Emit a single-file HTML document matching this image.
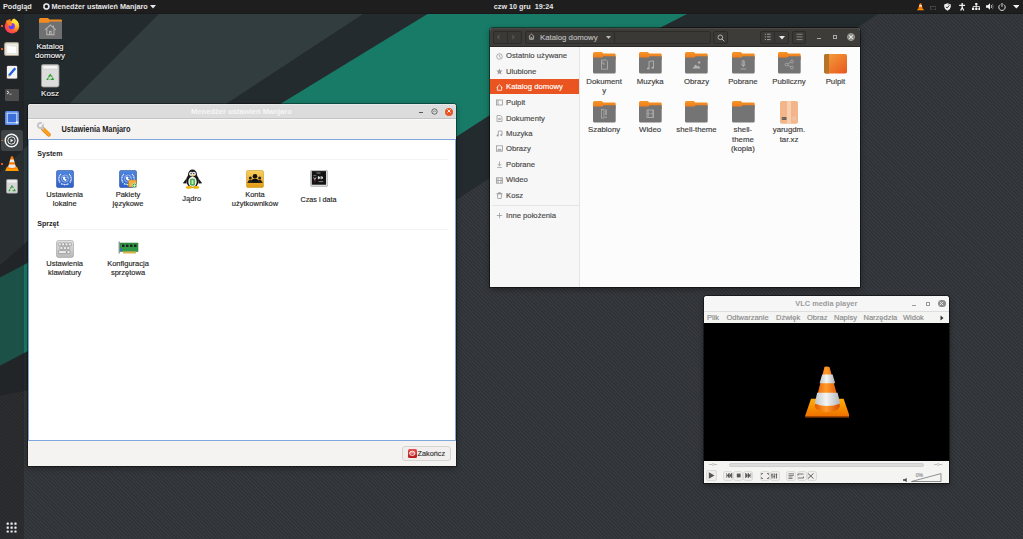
<!DOCTYPE html>
<html><head><meta charset="utf-8">
<style>
*{box-sizing:border-box}
html,body{margin:0;padding:0}
body{width:1023px;height:539px;overflow:hidden;position:relative;background:#303439;font-family:"Liberation Sans",sans-serif;}
.a{position:absolute}
#bg{position:absolute;left:0;top:0}
#topbar{position:absolute;left:0;top:0;width:1023px;height:14px;background:#1e1e1e;border-bottom:1px solid #191919;color:#e6e6e6;font-size:8.5px;line-height:14px}
#dock{position:absolute;left:0;top:14px;width:24px;height:525px;background:rgba(30,30,30,0.45)}
.dot{position:absolute;left:1px;width:2px;height:2px;border-radius:1px;background:#e95420}
.dtxt{position:absolute;color:#f4f4f4;font-size:8px;text-align:center;line-height:8.5px;text-shadow:0 0 2px #000,0 1px 1px #000}
.win{position:absolute;}
.t{position:absolute;white-space:nowrap}
.btn{background:#3a3935;border:1px solid #2d2c29;border-radius:2px}
body *{-webkit-text-stroke:0.15px currentColor}
[style*="bold"]{-webkit-text-stroke:0}
</style></head><body>
<svg id="bg" width="1023" height="539" viewBox="0 0 1023 539">
  <defs>
    <linearGradient id="fo" x1="0" y1="0" x2="0" y2="1"><stop offset="0" stop-color="#f5962a"/><stop offset="0.6" stop-color="#f0801c"/></linearGradient>
    <pattern id="pat" width="2.6" height="2.6" patternUnits="userSpaceOnUse" patternTransform="rotate(-45)">
      <rect width="2.6" height="2.6" fill="#2c2f33"/>
      <rect width="1.2" height="2.6" fill="#3a3d42"/>
    </pattern>
  </defs>
  <rect width="1023" height="539" fill="url(#pat)"/>
  <polygon points="0,0 880,0 878,14 858,27 490,178 456,200 26.5,390.5 0,395.8" fill="#242b2e"/>
  <polygon points="173,0 159,14 0,173 0,265 26.5,242 229,102 363,14 384,0" fill="#323d3f"/>
  <polygon points="450.5,0 427.5,14 283.5,102 26.5,263.5 0,277.6 0,365.8 26.5,351.7 456,137 490,115 687,14 714,0" fill="#187b67"/>
</svg>

<div id="topbar">
  <span class="t" style="left:3px;top:0.4px;font-size:7.3px;font-weight:bold;transform:scaleY(1.1);transform-origin:0 60%">Podgląd</span>
  <svg class="a" style="left:42.5px;top:3.3px" width="7" height="7" viewBox="0 0 7 7"><circle cx="3.4" cy="3.5" r="2.45" fill="none" stroke="#e6e6e6" stroke-width="1.5"/><circle cx="3.4" cy="3.5" r="3.1" fill="none" stroke="#e6e6e6" stroke-width="0.6" stroke-dasharray="0.8 0.8"/></svg>
  <span class="t" style="left:51.5px;top:0.4px;font-size:7.25px;font-weight:bold;transform:scaleY(1.1);transform-origin:0 60%">Menedżer ustawień Manjaro</span>
  <svg class="a" style="left:150.3px;top:5px" width="6" height="4" viewBox="0 0 6 4"><path d="M0 0H6L3 3.6Z" fill="#e8e8e8"/></svg>
  <span class="t" style="left:493.8px;top:0.4px;font-size:7.22px;font-weight:bold;transform:scaleY(1.1);transform-origin:0 60%">czw 10 gru&nbsp;&nbsp;19:24</span>
  <svg class="a" style="left:916.5px;top:3.4px" width="7" height="7.2" viewBox="0 0 7 7.2"><path d="M1 5.6H6L7 7.2H0Z" fill="#ff8c00"/><path d="M2.8 0.3H4.2L5.8 5.6Q3.5 6.5 1.2 5.6Z" fill="#ff7a00"/><path d="M2.4 2H4.6L5 3.4H2Z" fill="#eee"/></svg>
  <svg class="a" style="left:929.8px;top:5.6px" width="6.5" height="4.4" viewBox="0 0 6.5 4.4"><path d="M0 0.3H6.5L5.5 3.8Q3.2 4.8 1 3.8Z" fill="none" stroke="#5a5a5a" stroke-width="0.8"/></svg>
  <svg class="a" style="left:943.6px;top:3.3px" width="7" height="7.8" viewBox="0 0 7 7.8"><path d="M3.5 0.2L6.8 1.5V3.8Q6.5 6.6 3.5 7.7Q0.5 6.6 0.2 3.8V1.5Z" fill="#f2f2f2"/><path d="M1.9 3.8L3.2 5L5.2 2.6" stroke="#1c1c1c" stroke-width="0.9" fill="none"/><path d="M3.5 1.4L5.8 2.3" stroke="#1c1c1c" stroke-width="0.4"/></svg>
  <svg class="a" style="left:958.6px;top:3.2px" width="6.4" height="7.6" viewBox="0 0 6.4 7.6"><circle cx="3.2" cy="1" r="0.95" fill="#f2f2f2"/><path d="M0.2 2.3H6.2M3.2 2.3V4.6M3.2 4.6L1.6 7.6M3.2 4.6L4.8 7.6" stroke="#f2f2f2" stroke-width="1.2" fill="none"/></svg>
  <svg class="a" style="left:971.9px;top:3.4px" width="8.6" height="7" viewBox="0 0 8.6 7"><rect x="3.2" y="0" width="2.2" height="2.2" fill="#f2f2f2"/><rect x="0" y="4.8" width="2.2" height="2.2" fill="#f2f2f2"/><rect x="3.2" y="4.8" width="2.2" height="2.2" fill="#f2f2f2"/><rect x="6.4" y="4.8" width="2.2" height="2.2" fill="#f2f2f2"/><path d="M4.3 2V4.8M1.1 4.8V3.5H7.5V4.8" stroke="#f2f2f2" stroke-width="0.8" fill="none"/></svg>
  <svg class="a" style="left:985.5px;top:3.4px" width="8" height="7" viewBox="0 0 8 7"><path d="M0 2.2H1.8L4 0.2V6.8L1.8 4.8H0Z" fill="#f2f2f2"/><path d="M5.2 2Q6 3.5 5.2 5" stroke="#f2f2f2" stroke-width="0.8" fill="none"/><path d="M6.4 0.8Q8 3.5 6.4 6.2" stroke="#777" stroke-width="0.8" fill="none"/></svg>
  <svg class="a" style="left:998.4px;top:3.2px" width="8" height="7.6" viewBox="0 0 8 7.6"><path d="M2.2 1.6A3.2 3.2 0 1 0 5.8 1.6" stroke="#f2f2f2" stroke-width="0.9" fill="none"/><path d="M4 0V3.8" stroke="#f2f2f2" stroke-width="0.9"/></svg>
  <svg class="a" style="left:1012.5px;top:5.2px" width="6.7" height="3.6" viewBox="0 0 6.7 3.6"><path d="M0 0H6.7L3.35 3.6Z" fill="#f2f2f2"/></svg>
</div>

<div id="dock">
  <div class="dot" style="top:11.2px;width:1.6px;height:1.7px;border-radius:0"></div>
  <div class="dot" style="top:34.3px;width:1.6px;height:1.7px;border-radius:0"></div>
  <div class="dot" style="top:125.6px;width:1.6px;height:1.7px;border-radius:0"></div>
  <div class="dot" style="top:149px;width:1.6px;height:1.7px;border-radius:0"></div>
  <svg class="a" style="left:4px;top:4px" width="16" height="16" viewBox="0 0 16 16">
    <defs>
      <radialGradient id="ff" cx="0.8" cy="0.25" r="1.05"><stop offset="0" stop-color="#fff23a"/><stop offset="0.3" stop-color="#ffb626"/><stop offset="0.6" stop-color="#ff5a2e"/><stop offset="0.9" stop-color="#ff2f7a"/></radialGradient>
      <radialGradient id="fg" cx="0.3" cy="0.7" r="0.9"><stop offset="0" stop-color="#3b4aff"/><stop offset="1" stop-color="#b22df0"/></radialGradient>
    </defs>
    <circle cx="8" cy="8.1" r="7.3" fill="url(#ff)"/>
    <path d="M7.2 4 Q9.2 2.2 9.9 0.3 Q13.5 2.5 14.8 6 Q11 3.8 8.5 5.2Z" fill="#ffe53a"/>
    <path d="M5.8 0 L7 3.6 L9.4 0 Z" fill="#202526"/>
    <circle cx="7.8" cy="8.2" r="3.1" fill="url(#fg)"/>
    <path d="M2.2 3.2 Q2.8 2.2 3.2 1.8 Q3.8 3 4.4 2.9 Q5 2.2 5.8 2.2 Q6.6 4.6 8.3 5.8 Q7 6.6 7.8 7.8 Q5.8 8.2 4.6 7 Q3.2 5.2 2.2 3.2Z" fill="#ff8e1e"/>
  </svg>
  <svg class="a" style="left:4.2px;top:27.9px" width="15.3" height="14.3" viewBox="0 0 15.3 14.3">
    <rect x="0.6" y="0.6" width="14.1" height="13.1" rx="2" fill="#ecebe6" stroke="#a69e88" stroke-width="1.2"/>
    <path d="M2.7 3.2H6L7 4.2H12.6V11.3H2.7Z" fill="#ffffff" stroke="#d8d4c8" stroke-width="0.5"/>
  </svg>
  <svg class="a" style="left:6px;top:50.6px" width="12.1" height="14.4" viewBox="0 0 12.1 14.4">
    <rect x="0.5" y="0.5" width="11.1" height="13.4" rx="1.5" fill="#f4f4f4" stroke="#111" stroke-width="0.6"/>
    <path d="M3 10.5 L9.3 3.2" stroke="#1d5fe0" stroke-width="2.4" stroke-linecap="butt"/>
    <path d="M2.3 11.6 L3 10.5" stroke="#e8b36a" stroke-width="1.8"/>
  </svg>
  <svg class="a" style="left:4.8px;top:74.8px" width="14.4" height="12.1" viewBox="0 0 14.4 12.1">
    <rect x="0" y="0" width="14.4" height="12.1" rx="1.5" fill="#4d4d4d"/>
    <path d="M2 2 L4 3.5 L2 5" stroke="#e6e6e6" stroke-width="1" fill="none"/><path d="M4.5 5.2H6.5" stroke="#bbb" stroke-width="1"/>
  </svg>
  <svg class="a" style="left:5px;top:96.7px" width="14" height="14" viewBox="0 0 14 14">
    <rect x="0" y="0" width="14" height="14" rx="1.5" fill="#5b8def"/>
    <rect x="2.2" y="2.2" width="9.6" height="9.6" fill="#3c6fd8" stroke="#e9efff" stroke-width="0.8"/>
    <path d="M10.5 11.5H13.5M12 10V13" stroke="#fff" stroke-width="0.8"/>
  </svg>
  <div class="a" style="left:0.7px;top:115.9px;width:22.3px;height:21.5px;border-radius:2.5px;background:rgba(120,125,128,0.35)"></div>
  <svg class="a" style="left:4.3px;top:118.9px" width="15" height="15" viewBox="0 0 15 15">
    <circle cx="7.5" cy="7.5" r="6.3" fill="none" stroke="#f4f4f4" stroke-width="1.5"/>
    <circle cx="7.5" cy="7.5" r="3.7" fill="none" stroke="#e6e6e6" stroke-width="1"/>
    <path d="M6.5 5.8L9.3 7.5L6.5 9.2Z" fill="#f4f4f4"/>
  </svg>
  <svg class="a" style="left:4.9px;top:141.9px" width="14" height="15" viewBox="0 0 14 15">
    <path d="M2 10.8H12L13.9 15H0.1Z" fill="#ff9a00"/>
    <path d="M6 0.6Q7 0 8 0.6L11.3 12.2Q7 14 2.7 12.2Z" fill="#ff7a00"/>
    <path d="M5.3 3.5H8.7L9.5 6.3H4.5Z M4 8.4H10L10.8 11.2Q7 12.6 3.2 11.2Z" fill="#e8ecf0"/>
  </svg>
  <svg class="a" style="left:5.8px;top:165.2px" width="12" height="14.6" viewBox="0 0 12 14.6">
    <rect x="0.3" y="0.3" width="11.4" height="14" rx="1.5" fill="#d6d6d6" stroke="#888" stroke-width="0.6"/>
    <rect x="1.5" y="1.3" width="9" height="2.2" fill="#f0f0f0"/>
    <g transform="translate(-3.2,-3.6) scale(1)"><g fill="none" stroke="#2ea02e" stroke-width="1.1"><path d="M7.6 13.2 L9.2 10.6 L10.6 12.6"/><path d="M11.4 13.6 L12.2 15.4 L9.6 15.4"/><path d="M7.4 15.4 H6.4 L7.2 14"/></g></g>
  </svg>
  <svg class="a" style="left:6.4px;top:508px" width="11.2" height="11.2" viewBox="0 0 11.2 11.2" fill="#f0f0f0"><rect x="0.6" y="0.6" width="2.2" height="2.2" rx="0.5"/><rect x="4.5" y="0.6" width="2.2" height="2.2" rx="0.5"/><rect x="8.4" y="0.6" width="2.2" height="2.2" rx="0.5"/><rect x="0.6" y="4.5" width="2.2" height="2.2" rx="0.5"/><rect x="4.5" y="4.5" width="2.2" height="2.2" rx="0.5"/><rect x="8.4" y="4.5" width="2.2" height="2.2" rx="0.5"/><rect x="0.6" y="8.4" width="2.2" height="2.2" rx="0.5"/><rect x="4.5" y="8.4" width="2.2" height="2.2" rx="0.5"/><rect x="8.4" y="8.4" width="2.2" height="2.2" rx="0.5"/></svg>
</div>
<!-- desktop icons -->
<svg class="a" style="left:38.9px;top:18.2px" width="23.4" height="21.3" viewBox="0 0 23.4 21.3">
  <path d="M1.5 0H9L10.5 1.6H22Q23.4 1.6 23.4 3V8H0V1.5Q0 0 1.5 0Z" fill="#f28b22"/>
  <path d="M0 4.8H9.5L10.8 3.5H23.4V19.8Q23.4 21.3 21.9 21.3H1.5Q0 21.3 0 19.8Z" fill="#707070"/>
  <path d="M6 11.8L11.4 7L16.8 11.8M7.8 10.5V16.6H15V10.5M10.6 16.6V13.4H12.2V16.6M14.4 7.6V9.6" fill="none" stroke="#b0b0b0" stroke-width="1.1"/>
</svg>
<div class="dtxt" style="left:20px;top:42.2px;width:60px;line-height:9px">Katalog<br>domowy</div>
<svg class="a" style="left:41.4px;top:64.2px" width="18.4" height="23.4" viewBox="0 0 18.4 23.4">
  <rect x="0.4" y="0.4" width="17.6" height="22.6" rx="2" fill="#dcdcdc" stroke="#9a9a9a" stroke-width="0.8"/>
  <rect x="2" y="1.8" width="14.4" height="3.2" fill="#f4f4f4" stroke="#bbb" stroke-width="0.4"/>
  <g fill="none" stroke="#2ea02e" stroke-width="1.3"><path d="M7.6 13.2 L9.2 10.6 L10.6 12.6"/><path d="M11.4 13.6 L12.2 15.4 L9.6 15.4"/><path d="M7.4 15.4 H6.4 L7.2 14"/></g><path d="M10.2 12.4 L11.4 12.8 L11.6 11.6Z M9.2 14.7 V16.1 L8.4 15.4Z M6.9 13.2 L7.8 12.6 L8.2 13.6Z" fill="#2ea02e"/>
</svg>
<div class="dtxt" style="left:20px;top:89.5px;width:60px">Kosz</div>



<!-- MANJARO SETTINGS WINDOW -->
<div class="win" style="left:28px;top:104px;width:428px;height:362px;background:#f4f3f2;border-radius:3px 3px 0 0;box-shadow:0 0 0 1px rgba(0,0,0,0.35),0 2px 6px rgba(0,0,0,0.35);overflow:hidden">
  <div class="a" style="left:0;top:0;width:428px;height:15px;background:#dcdcdc;border-top:1px solid #e8e8e8;border-bottom:1px solid #c4c4c4;box-shadow:0 1px 0 #fafafa"></div>
  <div class="t" style="left:163px;top:3px;font-size:7.6px;font-weight:bold;color:#f6f6f6;line-height:9px">Menedżer ustawień Manjaro</div>
  <div class="a" style="left:391px;top:8.2px;width:3.5px;height:0.9px;background:#555"></div>
  <svg class="a" style="left:402.8px;top:4px" width="7" height="7" viewBox="0 0 7 7"><circle cx="3.5" cy="3.5" r="2.7" fill="none" stroke="#5a5a5a" stroke-width="0.9"/><path d="M2.3 3.9 L3.5 2.7 L4.7 3.9" stroke="#5a5a5a" stroke-width="0.7" fill="none"/></svg>
  <div class="a" style="left:416.5px;top:3.5px;width:8px;height:8px;background:#e95420;border-radius:50%;box-shadow:0 0 0 1px rgba(200,230,240,0.6)"></div>
  <svg class="a" style="left:418.5px;top:5.3px" width="4" height="4" viewBox="0 0 4 4"><path d="M0.4 0.4L3.6 3.6M3.6 0.4L0.4 3.6" stroke="#fff" stroke-width="0.9"/></svg>
  <!-- header -->
  <svg class="a" style="left:8px;top:18px" width="16" height="16" viewBox="0 0 16 16">
    <path d="M7.2 7.2 L12.8 12.6" stroke="#d9780f" stroke-width="4" stroke-linecap="round"/>
    <path d="M7.2 7.2 L12.8 12.6" stroke="#f7a11f" stroke-width="3" stroke-linecap="round"/><path d="M5 5 L7.5 7.5" stroke="#c3c3c8" stroke-width="1.8"/>
    <circle cx="4.4" cy="3.6" r="2.6" fill="none" stroke="#c3c3c8" stroke-width="1.9"/>
    <path d="M4.6 3.4 L7.5 0.5" stroke="#f2f1f0" stroke-width="1.4"/>
  </svg>
  <div class="t" style="left:33.5px;top:21.2px;font-size:7.4px;font-weight:bold;color:#222;line-height:10px;transform:scaleY(1.1);transform-origin:0 50%">Ustawienia Manjaro</div>
  <!-- content -->
  <div class="a" style="left:0;top:35px;width:428px;height:302px;background:#fff;border:1px solid #7fa7dc"></div>
  <div class="t" style="left:9.3px;top:45px;font-size:7.1px;font-weight:bold;color:#1e1e1e;line-height:10px;transform:scaleY(1.1);transform-origin:0 50%">System</div>
  <div class="a" style="left:8px;top:55px;width:412px;height:1px;background:#f4f4f2"></div>
  <div class="t" style="left:9.2px;top:114.5px;font-size:7.1px;font-weight:bold;color:#1e1e1e;line-height:10px;transform:scaleY(1.1);transform-origin:0 50%">Sprzęt</div>
  <div class="a" style="left:8px;top:125px;width:412px;height:1px;background:#f4f4f2"></div>
  <svg class="a" style="left:27.700000000000003px;top:66px" width="18" height="18" viewBox="0 0 18 18">
<defs><linearGradient id="gb1" x1="0" y1="0" x2="0" y2="1"><stop offset="0" stop-color="#4f86de"/><stop offset="1" stop-color="#2d5fc4"/></linearGradient></defs>
<rect x="0.5" y="0.5" width="17" height="17" rx="1.5" fill="url(#gb1)" stroke="#2c56a8" stroke-width="0.6"/>
<path d="M4.2 12.5 A5.8 5.8 0 0 1 5 4.2 M13.8 12.5 A5.8 5.8 0 0 0 13 4.2 M5 13.6 Q9 15.5 13 13.6" fill="none" stroke="#f4f8ff" stroke-width="1.3" stroke-dasharray="1.1 0.5"/>
<circle cx="9" cy="8.6" r="3.6" fill="none" stroke="#dfe9ff" stroke-width="0.5"/>
<path d="M6.8 7.2 Q8 6 9.5 7.3 L9 9 L10.8 9.5 L9.6 11.2 L8.4 10.2 L7.2 9.5Z M10.5 6.5 L11.6 7.6 L11 8.4Z" fill="#ffffff"/>

</svg><div class="a" style="left:-8.299999999999997px;top:85.8px;width:90px;text-align:center;font-size:7.5px;line-height:9px;color:#262626">Ustawienia<br>lokalne</div>
<svg class="a" style="left:91px;top:66px" width="18" height="18" viewBox="0 0 18 18">
<defs><linearGradient id="gb2" x1="0" y1="0" x2="0" y2="1"><stop offset="0" stop-color="#4f86de"/><stop offset="1" stop-color="#2d5fc4"/></linearGradient></defs>
<rect x="0.5" y="0.5" width="17" height="17" rx="1.5" fill="url(#gb2)" stroke="#2c56a8" stroke-width="0.6"/>
<path d="M4.2 12.5 A5.8 5.8 0 0 1 5 4.2 M13.8 12.5 A5.8 5.8 0 0 0 13 4.2 M5 13.6 Q9 15.5 13 13.6" fill="none" stroke="#f4f8ff" stroke-width="1.3" stroke-dasharray="1.1 0.5"/>
<circle cx="9" cy="8.6" r="3.6" fill="none" stroke="#dfe9ff" stroke-width="0.5"/>
<path d="M6.8 7.2 Q8 6 9.5 7.3 L9 9 L10.8 9.5 L9.6 11.2 L8.4 10.2 L7.2 9.5Z M10.5 6.5 L11.6 7.6 L11 8.4Z" fill="#ffffff"/>
<rect x="9.5" y="10" width="8" height="7" rx="1" fill="#f0b040" stroke="#b07010" stroke-width="0.5"/><circle cx="15.5" cy="15.5" r="2.3" fill="#3aa83a" stroke="#fff" stroke-width="0.5"/><path d="M14.2 15.5h2.6M15.5 14.2v2.6" stroke="#fff" stroke-width="0.7"/>
</svg><div class="a" style="left:55px;top:85.8px;width:90px;text-align:center;font-size:7.5px;line-height:9px;color:#262626">Pakiety<br>językowe</div>
<svg class="a" style="left:153.5px;top:65px" width="21" height="20" viewBox="0 0 21 20">
<ellipse cx="10.5" cy="11.5" rx="6.3" ry="7" fill="#151515"/>
<ellipse cx="10.5" cy="5.2" rx="4.4" ry="4.6" fill="#1a1a1a"/>
<path d="M7 4.8 Q7.5 2.4 9.4 2.8 Q10.5 3.6 11.6 2.8 Q13.5 2.4 14 4.8 Q14 7 10.5 7.4 Q7 7 7 4.8Z" fill="#e8e8e8"/>
<ellipse cx="10.5" cy="12.8" rx="4.2" ry="5.2" fill="#f0f0f0"/>
<circle cx="9.2" cy="4.6" r="0.7" fill="#111"/><circle cx="11.8" cy="4.6" r="0.7" fill="#111"/>
<path d="M8.8 6.3 L10.5 7.8 L12.2 6.3 Z" fill="#f5b400"/>
<rect x="8.4" y="10" width="4.2" height="6.2" rx="0.8" fill="#4fc04f" stroke="#2a7a2a" stroke-width="0.5"/>
<rect x="9.7" y="11.2" width="1.6" height="3.8" fill="#bff0bf"/>
<ellipse cx="7" cy="18.4" rx="3.1" ry="1.4" fill="#f5b400"/><ellipse cx="14" cy="18.4" rx="3.1" ry="1.4" fill="#f5b400"/>
<path d="M4.5 9.5 L0.8 14.2 L4.3 14.5Z M16.5 9.5 L20.2 14.2 L16.7 14.5Z" fill="#151515"/>
</svg><div class="a" style="left:118.69999999999999px;top:90.2px;width:90px;text-align:center;font-size:7.5px;line-height:9px;color:#262626">Jądro</div>
<svg class="a" style="left:218px;top:66px" width="18" height="18" viewBox="0 0 18 18">
<defs><linearGradient id="gy" x1="0" y1="0" x2="0" y2="1"><stop offset="0" stop-color="#f7d160"/><stop offset="1" stop-color="#e39a12"/></linearGradient></defs>
<rect x="0.5" y="0.5" width="17" height="17" rx="1.5" fill="url(#gy)" stroke="#c98a10" stroke-width="0.5"/>
<circle cx="9" cy="6.3" r="2.3" fill="#111"/><path d="M4.8 12.5 Q5 8.8 9 8.8 Q13 8.8 13.2 12.5Z" fill="#111"/>
<circle cx="4.3" cy="8" r="1.5" fill="#222"/><path d="M1.8 12.3 Q2 9.8 4.3 9.8 Q6.3 9.8 6.5 12.3Z" fill="#222"/>
<circle cx="13.7" cy="8" r="1.5" fill="#222"/><path d="M11.5 12.3 Q11.7 9.8 13.7 9.8 Q16 9.8 16.2 12.3Z" fill="#222"/>
<rect x="1.5" y="12.2" width="15" height="0.8" fill="#111"/>
</svg><div class="a" style="left:182px;top:85.8px;width:90px;text-align:center;font-size:7.5px;line-height:9px;color:#262626">Konta<br>użytkowników</div>
<svg class="a" style="left:281.6px;top:66px" width="18" height="17" viewBox="0 0 18 17">
<rect x="0.4" y="0.3" width="17.4" height="16.4" rx="2" fill="#dadada" stroke="#a0a0a0" stroke-width="0.6"/>
<rect x="1.8" y="1.1" width="14.2" height="13.6" fill="#141414"/>
<path d="M6.5 3H10.5" stroke="#9a9a9a" stroke-width="0.9"/>
<path d="M3.3 5.6H6.3" stroke="#9a9a9a" stroke-width="0.7"/>
<path d="M3.6 7.4L4.8 9.6L6 7.4" stroke="#d8d8d8" stroke-width="0.8" fill="none"/>
<circle cx="4.8" cy="10.9" r="0.7" fill="#d03030"/>
<path d="M8.4 6.2V9.2M11.2 6.2V9.2M9.6 6.8V8.6M12.4 6.8V8.6" stroke="#f0f0f0" stroke-width="1"/>
<path d="M8.6 11.6H13.2" stroke="#9a9a9a" stroke-width="0.8"/>
</svg><div class="a" style="left:245.5px;top:90.5px;width:90px;text-align:center;font-size:7.2px;line-height:9px;color:#262626">Czas i data</div>
<svg class="a" style="left:27.7px;top:135.6px" width="18" height="18" viewBox="0 0 18 18">
<defs><linearGradient id="gk" x1="0" y1="0" x2="0" y2="1"><stop offset="0" stop-color="#e4e4e4"/><stop offset="1" stop-color="#b8b8b8"/></linearGradient></defs>
<rect x="0.5" y="0.5" width="17" height="17" rx="2" fill="url(#gk)" stroke="#a0a0a0" stroke-width="0.6"/>
<g fill="#ececec" stroke="#7a7a7a" stroke-width="0.55">
<rect x="2.2" y="2.8" width="3" height="3" rx="0.6"/><rect x="5.6" y="2.8" width="3" height="3" rx="0.6"/><rect x="9" y="2.8" width="3" height="3" rx="0.6"/><rect x="12.4" y="2.8" width="3" height="3" rx="0.6"/>
<rect x="4" y="6.6" width="3" height="3" rx="0.6"/><rect x="7.4" y="6.6" width="3" height="3" rx="0.6"/><rect x="10.8" y="6.6" width="3" height="3" rx="0.6"/>
<rect x="2.6" y="10.6" width="7.8" height="3" rx="0.6"/><rect x="11" y="10.6" width="3" height="3" rx="0.6"/>
</g></svg><div class="a" style="left:-8.299999999999997px;top:155.3px;width:90px;text-align:center;font-size:7.5px;line-height:9px;color:#262626">Ustawienia<br>klawiatury</div>
<svg class="a" style="left:90px;top:137px" width="21" height="14" viewBox="0 0 21 14">
<rect x="0.5" y="0.5" width="1.5" height="12" fill="#9aa4aa"/>
<rect x="2" y="2" width="18" height="8.5" fill="#2f9a45" stroke="#1e6a2e" stroke-width="0.5"/>
<rect x="4" y="3.5" width="2.5" height="2.5" fill="#222"/><rect x="8" y="3.5" width="2.5" height="2.5" fill="#222"/><rect x="12" y="3.5" width="2.5" height="2.5" fill="#222"/><rect x="16" y="3.5" width="2.5" height="2.5" fill="#222"/>
<rect x="5" y="10.5" width="13" height="2" fill="#d9b44a"/>
<rect x="2.5" y="7" width="1.5" height="3" fill="#3a6ad0"/>
</svg><div class="a" style="left:55px;top:155.3px;width:90px;text-align:center;font-size:7.5px;line-height:9px;color:#262626">Konfiguracja<br>sprzętowa</div>

  <!-- footer button -->
  <div class="a" style="left:374px;top:342px;width:49px;height:15px;background:#f0efed;border:1px solid #d6d4d0;border-radius:3px"></div>
  <div class="a" style="left:380px;top:345px;width:8.5px;height:8.5px;border-radius:1.5px;background:linear-gradient(#e84b4b,#b51c1c)"></div>
  <svg class="a" style="left:380px;top:345px" width="8.5" height="8.5" viewBox="0 0 8.5 8.5"><ellipse cx="4.25" cy="4.3" rx="2.7" ry="2.1" fill="none" stroke="#fff" stroke-width="0.9"/><path d="M1.8 3.9H6.7" stroke="#fff" stroke-width="0.8"/></svg>
  <div class="t" style="left:389.5px;top:345px;font-size:7.3px;color:#333;line-height:10px">Zakończ</div>
</div>


<!-- FILES WINDOW -->
<div class="win" style="left:490px;top:27.5px;width:370px;height:259px;background:#fff;border-radius:3px 3px 0 0;box-shadow:0 0 0 1px rgba(0,0,0,0.45),0 2px 6px rgba(0,0,0,0.4);overflow:hidden">
  <div class="a" style="left:0;top:0;width:370px;height:19px;background:#3d3c38;border-top:1px solid #4c4743;border-bottom:1px solid #2a2926"></div>
  <div class="a btn" style="left:2.5px;top:3px;width:29px;height:13px"></div>
  <div class="a" style="left:17px;top:3.5px;width:1px;height:12px;background:#2e2d2a"></div>
  <div class="t" style="left:7px;top:3px;font-size:9px;line-height:12px;color:#6a6964">&#x2039;</div>
  <div class="t" style="left:21.5px;top:3px;font-size:9px;line-height:12px;color:#6a6964">&#x203A;</div>
  <div class="a btn" style="left:34.5px;top:3px;width:90px;height:13px"></div>
  <svg class="a" style="left:38px;top:5.5px" width="7" height="7" viewBox="0 0 7 7"><path d="M0.8 3.6 L3.5 1 L6.2 3.6 M1.6 3 V6.3 H5.4 V3 M2.9 6.3 V4.6 H4.1 V6.3" fill="none" stroke="#bdbdbd" stroke-width="0.8"/></svg>
  <div class="t" style="left:50px;top:4px;font-size:7.8px;line-height:11px;color:#bdbdbd">Katalog domowy</div>
  <svg class="a" style="left:115.5px;top:8px" width="5" height="3" viewBox="0 0 5 3"><path d="M0 0H5L2.5 3Z" fill="#bdbdbd"/></svg>
  <div class="a btn" style="left:124px;top:3px;width:97px;height:13px;border-radius:0 2px 2px 0"></div>
  <div class="a btn" style="left:223px;top:3px;width:14.5px;height:13px"></div>
  <svg class="a" style="left:226.5px;top:6px" width="8" height="8" viewBox="0 0 8 8"><circle cx="3.3" cy="3.3" r="2.3" fill="none" stroke="#bdbdbd" stroke-width="0.9"/><path d="M5 5 L7.2 7.2" stroke="#bdbdbd" stroke-width="1"/></svg>
  <div class="a btn" style="left:270px;top:3px;width:28.5px;height:13px"></div>
  <div class="a" style="left:284px;top:3.5px;width:1px;height:12px;background:#2e2d2a"></div>
  <svg class="a" style="left:274px;top:5.8px" width="7" height="8" viewBox="0 0 7 8"><path d="M0.8 1.2h1.2 M0.8 3.9h1.2 M0.8 6.6h1.2 M3 1.2h3.6 M3 3.9h3.6 M3 6.6h3.6" stroke="#bdbdbd" stroke-width="0.8" fill="none"/></svg>
  <svg class="a" style="left:288.5px;top:8px" width="6" height="4" viewBox="0 0 6 4"><path d="M0 0H6L3 3.5Z" fill="#e8e8e8"/></svg>
  <div class="a btn" style="left:301.5px;top:3px;width:14.5px;height:13px"></div>
  <svg class="a" style="left:305.8px;top:5.6px" width="7" height="8" viewBox="0 0 7 8"><path d="M0.5 1.2h6 M0.5 3.9h6 M0.5 6.6h6" stroke="#a9a9a9" stroke-width="0.7"/></svg>
  <div class="a" style="left:327px;top:10.5px;width:4px;height:1px;background:#a8a8a8"></div>
  <div class="a" style="left:342.6px;top:7px;width:4.2px;height:4.2px;border:1px solid #a8a8a8"></div>
  <div class="a" style="left:356.6px;top:5.1px;width:8.4px;height:8.4px;border-radius:50%;background:#858580;border:0.6px solid #9a9a96"></div>
  <svg class="a" style="left:357.8px;top:6.6px" width="6" height="6" viewBox="0 0 6 6"><path d="M1.2 1.2L4.8 4.8M4.8 1.2L1.2 4.8" stroke="#e6e6e6" stroke-width="1.1"/></svg>
  <!-- sidebar -->
  <div class="a" style="left:0;top:19px;width:89.5px;height:240px;background:#f7f7f7;border-right:1px solid #e4e4e4"></div>
  <div class="a" style="left:0;top:51.7px;width:89px;height:14.5px;background:#e95420"></div>
<svg class="a" style="left:5.5px;top:25.0px" width="7" height="7" viewBox="0 0 7 7"><circle cx="3.5" cy="3.5" r="2.8" stroke="#9a9a9a" stroke-width="0.8" fill="none"/><path d="M3.5 1.8V3.7L4.8 4.6" stroke="#9a9a9a" stroke-width="0.8" fill="none"/></svg>
<div class="t" style="left:16px;top:22.9px;font-size:7.7px;line-height:11px;color:#4a4a4a">Ostatnio używane</div>
<svg class="a" style="left:5.5px;top:40.5px" width="7" height="7" viewBox="0 0 7 7"><path d="M3.5 0.4L4.4 2.5L6.7 2.6L4.9 4.1L5.5 6.5L3.5 5.2L1.5 6.5L2.1 4.1L0.3 2.6L2.6 2.5Z" fill="#9a9a9a"/></svg>
<div class="t" style="left:16px;top:38.4px;font-size:7.7px;line-height:11px;color:#4a4a4a">Ulubione</div>
<svg class="a" style="left:5.5px;top:56.0px" width="7" height="7" viewBox="0 0 7 7"><path d="M0.6 3.6L3.5 0.9L6.4 3.6M1.4 3V6.3H5.6V3" stroke="#ffffff" stroke-width="0.8" fill="none"/></svg>
<div class="t" style="left:16px;top:53.9px;font-size:7.7px;line-height:11px;color:#ffffff">Katalog domowy</div>
<svg class="a" style="left:5.5px;top:71.6px" width="7" height="7" viewBox="0 0 7 7"><rect x="0.5" y="1" width="6" height="5" stroke="#9a9a9a" stroke-width="0.8" fill="none"/><path d="M2 1V6" stroke="#9a9a9a" stroke-width="0.8" fill="none"/></svg>
<div class="t" style="left:16px;top:69.5px;font-size:7.7px;line-height:11px;color:#4a4a4a">Pulpit</div>
<svg class="a" style="left:5.5px;top:87.2px" width="7" height="7" viewBox="0 0 7 7"><path d="M1 0.5H4.3L6 2.2V6.5H1Z M2.2 3.3H4.8M2.2 4.6H4.8" stroke="#9a9a9a" stroke-width="0.8" fill="none"/></svg>
<div class="t" style="left:16px;top:85.10000000000001px;font-size:7.7px;line-height:11px;color:#4a4a4a">Dokumenty</div>
<svg class="a" style="left:5.5px;top:102.8px" width="7" height="7" viewBox="0 0 7 7"><path d="M2.3 5.5V1H6V4.8" stroke="#9a9a9a" stroke-width="0.8" fill="none"/><circle cx="1.6" cy="5.6" r="1" fill="#9a9a9a"/><circle cx="5.3" cy="5" r="1" fill="#9a9a9a"/></svg>
<div class="t" style="left:16px;top:100.7px;font-size:7.7px;line-height:11px;color:#4a4a4a">Muzyka</div>
<svg class="a" style="left:5.5px;top:117.9px" width="7" height="7" viewBox="0 0 7 7"><rect x="0.5" y="0.8" width="6" height="5.4" stroke="#9a9a9a" stroke-width="0.8" fill="none"/><path d="M1 5.6L2.8 3.4L4 4.6L4.8 3.8L6 5.6Z" fill="#9a9a9a"/></svg>
<div class="t" style="left:16px;top:115.80000000000001px;font-size:7.7px;line-height:11px;color:#4a4a4a">Obrazy</div>
<svg class="a" style="left:5.5px;top:133.5px" width="7" height="7" viewBox="0 0 7 7"><path d="M3.5 0.5V4.5M1.8 3L3.5 4.8L5.2 3M1.2 6.4H5.8" stroke="#9a9a9a" stroke-width="0.8" fill="none"/></svg>
<div class="t" style="left:16px;top:131.4px;font-size:7.7px;line-height:11px;color:#4a4a4a">Pobrane</div>
<svg class="a" style="left:5.5px;top:149.0px" width="7" height="7" viewBox="0 0 7 7"><rect x="0.5" y="0.8" width="6" height="5.4" stroke="#9a9a9a" stroke-width="0.8" fill="none"/><path d="M0.5 3.5H6.5M2 0.8V6.2M5 0.8V6.2" stroke="#9a9a9a" stroke-width="0.8" fill="none"/></svg>
<div class="t" style="left:16px;top:146.9px;font-size:7.7px;line-height:11px;color:#4a4a4a">Wideo</div>
<svg class="a" style="left:5.5px;top:164.7px" width="7" height="7" viewBox="0 0 7 7"><path d="M1.3 2H5.7L5.2 6.5H1.8Z M0.6 1.5H6.4M2.6 1.5V0.6H4.4V1.5" stroke="#9a9a9a" stroke-width="0.8" fill="none"/></svg>
<div class="t" style="left:16px;top:162.6px;font-size:7.7px;line-height:11px;color:#4a4a4a">Kosz</div>
<svg class="a" style="left:5.5px;top:184.1px" width="7" height="7" viewBox="0 0 7 7"><path d="M3.5 0.8V6.2M0.8 3.5H6.2" stroke="#9a9a9a" stroke-width="0.8" fill="none"/></svg>
<div class="t" style="left:16px;top:182.0px;font-size:7.7px;line-height:11px;color:#4a4a4a">Inne położenia</div>
<div class="a" style="left:2px;top:177.8px;width:87px;height:1px;background:#e4e4e4"></div>

  <div class="a" style="left:90px;top:19px;width:280px;height:240px;background:#fcfcfc"></div>
<svg class="a" style="left:102.69999999999999px;top:24.8px" width="23" height="22" viewBox="0 0 23 22">
<path d="M1.5 0H8.8L10.3 1.6H21.5Q22.7 1.6 22.7 2.8V8H0V1.5Q0 0 1.5 0Z" fill="url(#fo)"/>
<path d="M0 5.4H9.4L10.7 4.3H22.7V20Q22.7 21.5 21.2 21.5H1.5Q0 21.5 0 20Z" fill="#747474"/>
<path d="M8.5 8H13.2L14.5 9.3V17.2H8.5Z M10 9.5V12H12" fill="none" stroke="#b3b3b3" stroke-width="0.8"/></svg>
<div class="a" style="left:84.1px;top:49px;width:60px;text-align:center;font-size:7.8px;line-height:9.3px;color:#3c3c3c">Dokument<br>y</div>
<svg class="a" style="left:148.7px;top:24.8px" width="23" height="22" viewBox="0 0 23 22">
<path d="M1.5 0H8.8L10.3 1.6H21.5Q22.7 1.6 22.7 2.8V8H0V1.5Q0 0 1.5 0Z" fill="url(#fo)"/>
<path d="M0 5.4H9.4L10.7 4.3H22.7V20Q22.7 21.5 21.2 21.5H1.5Q0 21.5 0 20Z" fill="#747474"/>
<path d="M10 16.5V9.5L14.5 8.8V15.5" fill="none" stroke="#b3b3b3" stroke-width="0.9"/><ellipse cx="9.2" cy="16.6" rx="1.3" ry="1" fill="#b3b3b3"/><ellipse cx="13.7" cy="15.7" rx="1.3" ry="1" fill="#b3b3b3"/></svg>
<div class="a" style="left:130.1px;top:49px;width:60px;text-align:center;font-size:7.8px;line-height:9.3px;color:#3c3c3c">Muzyka</div>
<svg class="a" style="left:195.1px;top:24.8px" width="23" height="22" viewBox="0 0 23 22">
<path d="M1.5 0H8.8L10.3 1.6H21.5Q22.7 1.6 22.7 2.8V8H0V1.5Q0 0 1.5 0Z" fill="url(#fo)"/>
<path d="M0 5.4H9.4L10.7 4.3H22.7V20Q22.7 21.5 21.2 21.5H1.5Q0 21.5 0 20Z" fill="#747474"/>
<path d="M7.5 16.5L10.5 12.5L12.5 14.5L13.5 13.5L15.5 16.5Z" fill="#b3b3b3"/><circle cx="14.2" cy="10.5" r="1.2" fill="#b3b3b3"/></svg>
<div class="a" style="left:176.5px;top:49px;width:60px;text-align:center;font-size:7.8px;line-height:9.3px;color:#3c3c3c">Obrazy</div>
<svg class="a" style="left:241.5px;top:24.8px" width="23" height="22" viewBox="0 0 23 22">
<path d="M1.5 0H8.8L10.3 1.6H21.5Q22.7 1.6 22.7 2.8V8H0V1.5Q0 0 1.5 0Z" fill="url(#fo)"/>
<path d="M0 5.4H9.4L10.7 4.3H22.7V20Q22.7 21.5 21.2 21.5H1.5Q0 21.5 0 20Z" fill="#747474"/>
<path d="M11.3 8.5V14.5 M9.5 12.5L11.3 14.6L13.1 12.5 M8.5 17H14" fill="none" stroke="#b3b3b3" stroke-width="0.8"/><rect x="10" y="8.5" width="2.6" height="5" rx="1.3" fill="none" stroke="#b3b3b3" stroke-width="0.7"/></svg>
<div class="a" style="left:222.9px;top:49px;width:60px;text-align:center;font-size:7.8px;line-height:9.3px;color:#3c3c3c">Pobrane</div>
<svg class="a" style="left:287.6px;top:24.8px" width="23" height="22" viewBox="0 0 23 22">
<path d="M1.5 0H8.8L10.3 1.6H21.5Q22.7 1.6 22.7 2.8V8H0V1.5Q0 0 1.5 0Z" fill="url(#fo)"/>
<path d="M0 5.4H9.4L10.7 4.3H22.7V20Q22.7 21.5 21.2 21.5H1.5Q0 21.5 0 20Z" fill="#747474"/>
<circle cx="8.5" cy="12.5" r="1.4" fill="none" stroke="#b3b3b3" stroke-width="0.7"/><circle cx="14" cy="9.5" r="1.4" fill="none" stroke="#b3b3b3" stroke-width="0.7"/><circle cx="14" cy="15.5" r="1.4" fill="none" stroke="#b3b3b3" stroke-width="0.7"/><path d="M9.7 11.8L12.8 10.2M9.7 13.2L12.8 14.8" stroke="#b3b3b3" stroke-width="0.7"/></svg>
<div class="a" style="left:269px;top:49px;width:60px;text-align:center;font-size:7.8px;line-height:9.3px;color:#3c3c3c">Publiczny</div>
<svg class="a" style="left:334.0px;top:26.5px" width="23" height="20" viewBox="0 0 23 20">
<defs><linearGradient id="gp" x1="0" y1="0" x2="1" y2="1"><stop offset="0" stop-color="#f6a33a"/><stop offset="1" stop-color="#e8561f"/></linearGradient></defs>
<rect x="0" y="0" width="23" height="19.5" rx="1.8" fill="url(#gp)"/><path d="M1.8 0H5V19.5H1.8Q0 19.5 0 17.7V1.8Q0 0 1.8 0Z" fill="#b5742a"/></svg>
<div class="a" style="left:315.4px;top:49px;width:60px;text-align:center;font-size:7.8px;line-height:9.3px;color:#3c3c3c">Pulpit</div>
<svg class="a" style="left:102.69999999999999px;top:73.9px" width="23" height="22" viewBox="0 0 23 22">
<path d="M1.5 0H8.8L10.3 1.6H21.5Q22.7 1.6 22.7 2.8V8H0V1.5Q0 0 1.5 0Z" fill="url(#fo)"/>
<path d="M0 5.4H9.4L10.7 4.3H22.7V20Q22.7 21.5 21.2 21.5H1.5Q0 21.5 0 20Z" fill="#747474"/>
<rect x="8.5" y="8.5" width="2.5" height="8.5" fill="none" stroke="#b3b3b3" stroke-width="0.7"/><path d="M13 8.5V14M13 15.5V17" stroke="#b3b3b3" stroke-width="1.2"/></svg>
<div class="a" style="left:84.1px;top:97.8px;width:60px;text-align:center;font-size:7.8px;line-height:9.3px;color:#3c3c3c">Szablony</div>
<svg class="a" style="left:148.7px;top:73.9px" width="23" height="22" viewBox="0 0 23 22">
<path d="M1.5 0H8.8L10.3 1.6H21.5Q22.7 1.6 22.7 2.8V8H0V1.5Q0 0 1.5 0Z" fill="url(#fo)"/>
<path d="M0 5.4H9.4L10.7 4.3H22.7V20Q22.7 21.5 21.2 21.5H1.5Q0 21.5 0 20Z" fill="#747474"/>
<rect x="8" y="9" width="6.6" height="7.5" fill="none" stroke="#b3b3b3" stroke-width="0.8"/><path d="M8 12.7H14.6M9.3 9V16.5M13.3 9V16.5" stroke="#b3b3b3" stroke-width="0.6"/></svg>
<div class="a" style="left:130.1px;top:97.8px;width:60px;text-align:center;font-size:7.8px;line-height:9.3px;color:#3c3c3c">Wideo</div>
<svg class="a" style="left:195.1px;top:73.9px" width="23" height="22" viewBox="0 0 23 22">
<path d="M1.5 0H8.8L10.3 1.6H21.5Q22.7 1.6 22.7 2.8V8H0V1.5Q0 0 1.5 0Z" fill="url(#fo)"/>
<path d="M0 5.4H9.4L10.7 4.3H22.7V20Q22.7 21.5 21.2 21.5H1.5Q0 21.5 0 20Z" fill="#747474"/>
</svg>
<div class="a" style="left:176.5px;top:97.8px;width:60px;text-align:center;font-size:7.8px;line-height:9.3px;color:#3c3c3c">shell-theme</div>
<svg class="a" style="left:241.5px;top:73.9px" width="23" height="22" viewBox="0 0 23 22">
<path d="M1.5 0H8.8L10.3 1.6H21.5Q22.7 1.6 22.7 2.8V8H0V1.5Q0 0 1.5 0Z" fill="url(#fo)"/>
<path d="M0 5.4H9.4L10.7 4.3H22.7V20Q22.7 21.5 21.2 21.5H1.5Q0 21.5 0 20Z" fill="#747474"/>
</svg>
<div class="a" style="left:222.9px;top:97.8px;width:60px;text-align:center;font-size:7.8px;line-height:9.3px;color:#3c3c3c">shell-<br>theme<br>(kopia)</div>
<svg class="a" style="left:290px;top:73px" width="18" height="23" viewBox="0 0 18 23">
<rect x="0" y="0" width="18" height="22.7" rx="1.8" fill="#f2b68a"/><rect x="7" y="0" width="4" height="22.7" fill="#f7cfae"/>
<rect x="1.8" y="16.2" width="4.6" height="2.6" fill="#4a4a4a"/><path d="M2.4 17.5h3.4" stroke="#ddd" stroke-width="0.6" stroke-dasharray="0.6 0.5"/>
<path d="M12.5 15.5h3.5v4h-3.5z" fill="#eec39d"/></svg>
<div class="a" style="left:269px;top:97.8px;width:60px;text-align:center;font-size:7.8px;line-height:9.3px;color:#3c3c3c">yarugdm.<br>tar.xz</div>

</div>


<!-- VLC WINDOW -->
<div class="win" style="left:703.8px;top:296.4px;width:245.2px;height:187px;background:#f4f4f3;border-radius:3px 3px 0 0;box-shadow:0 0 0 1px rgba(0,0,0,0.45),0 2px 6px rgba(0,0,0,0.4);overflow:hidden">
  <div class="a" style="left:0;top:0;width:246px;height:15.6px;background:#f6f6f6;border-bottom:1px solid #dedede"></div>
  <div class="t" style="left:91.5px;top:2.5px;font-size:7.4px;font-weight:bold;line-height:10px;color:#9b9b9b">VLC media player</div>
  <div class="a" style="left:208.5px;top:8.3px;width:4px;height:1px;background:#9a9a9a"></div>
  <div class="a" style="left:222px;top:5.6px;width:4.5px;height:4px;border:1px solid #9a9a9a"></div>
  <div class="a" style="left:234.4px;top:3.6px;width:7.4px;height:7.4px;border-radius:50%;background:#8c8c8c"></div>
  <svg class="a" style="left:235.6px;top:4.8px" width="5" height="5" viewBox="0 0 5 5"><path d="M0.8 0.8L4.2 4.2M4.2 0.8L0.8 4.2" stroke="#eee" stroke-width="0.9"/></svg>
  <div class="t" style="left:3.2px;top:15.6px;font-size:7.5px;line-height:11px;color:#8a8a8a">Plik</div>
<div class="t" style="left:22.7px;top:15.6px;font-size:7.5px;line-height:11px;color:#8a8a8a">Odtwarzanie</div>
<div class="t" style="left:72.2px;top:15.6px;font-size:7.5px;line-height:11px;color:#8a8a8a">Dźwięk</div>
<div class="t" style="left:103.2px;top:15.6px;font-size:7.5px;line-height:11px;color:#8a8a8a">Obraz</div>
<div class="t" style="left:130.2px;top:15.6px;font-size:7.5px;line-height:11px;color:#8a8a8a">Napisy</div>
<div class="t" style="left:159.7px;top:15.6px;font-size:7.5px;line-height:11px;color:#8a8a8a">Narzędzia</div>
<div class="t" style="left:199.2px;top:15.6px;font-size:7.5px;line-height:11px;color:#8a8a8a">Widok</div>

  <svg class="a" style="left:236.5px;top:18.5px" width="4" height="6" viewBox="0 0 4 6"><path d="M0.5 0.5L3.5 3L0.5 5.5Z" fill="#333"/></svg>
  <div class="a" style="left:0;top:27.1px;width:246px;height:137.5px;background:#000"></div>
  <svg class="a" style="left:95.2px;top:70px" width="50" height="52" viewBox="0 0 48 52">
    <defs>
      <linearGradient id="vo" x1="0" y1="0" x2="1" y2="0"><stop offset="0" stop-color="#e25a00"/><stop offset="0.45" stop-color="#ff9a2a"/><stop offset="1" stop-color="#d84f00"/></linearGradient>
      <linearGradient id="vw" x1="0" y1="0" x2="1" y2="0"><stop offset="0" stop-color="#bfc3c8"/><stop offset="0.45" stop-color="#f4f4f4"/><stop offset="1" stop-color="#b0b4ba"/></linearGradient>
      <linearGradient id="vb" x1="0" y1="0" x2="0" y2="1"><stop offset="0" stop-color="#ffb000"/><stop offset="1" stop-color="#f07000"/></linearGradient>
    </defs>
    <path d="M11 32.8 H43.6 L49.7 50.3 H5 Z" fill="url(#vb)"/>
    <path d="M5 50.3 H49.7 L49 51.5 H5.5Z" fill="#c05000"/>
    <path d="M24.5 0.8 Q27.4 0.2 29.5 1 L39.8 39 Q40 45.5 27.4 46 Q14.6 45.5 14.8 39 Z" fill="url(#vo)"/>
    <path d="M22.2 8.6 H32.6 L35.2 17.2 H19.6 Z" fill="url(#vw)"/>
    <path d="M17.2 26.8 H37.6 L40.2 37.5 Q34 40 27.4 40 Q20.6 40 14.6 37.5 Z" fill="url(#vw)"/>
  </svg>
  <!-- controls -->
  <div class="t" style="left:5px;top:165px;font-size:6px;line-height:7px;color:#777;letter-spacing:-0.3px">--:--</div>
  <div class="a" style="left:24.8px;top:167.1px;width:195.6px;height:3.5px;border-radius:2px;background:#dcdcdc;border:0.5px solid #cfcfcf"></div>
  <div class="t" style="left:230px;top:165px;font-size:6px;line-height:7px;color:#777;letter-spacing:-0.3px">--:--</div>
  <div class="a" style="left:1.9px;top:174px;width:11.8px;height:11.1px;border:1px solid #dcdad6;border-radius:2px;background:#eeedeb"></div>
  <svg class="a" style="left:4.5px;top:176px" width="7" height="7" viewBox="0 0 7 7"><path d="M0.8 0.3L6.5 3.5L0.8 6.7Z" fill="#555"/></svg>
  <div class="a" style="left:19.2px;top:174.6px;width:10px;height:10.2px;border:1px solid #dddbd7;border-radius:2.5px;background:#efeeec"></div><div class="a" style="left:29.4px;top:174.6px;width:10px;height:10.2px;border:1px solid #dddbd7;border-radius:2.5px;background:#efeeec"></div><div class="a" style="left:39.6px;top:174.6px;width:10px;height:10.2px;border:1px solid #dddbd7;border-radius:2.5px;background:#efeeec"></div>
  <svg class="a" style="left:22px;top:177px" width="26" height="5" viewBox="0 0 26 5"><path d="M0.5 0V5M1 2.5L3.3 0V5ZM3.5 2.5L5.8 0V5Z" fill="#555" stroke="#555" stroke-width="0.5"/><rect x="10.8" y="0.6" width="3.8" height="3.8" fill="#555"/><path d="M19.5 0V5L21.8 2.5ZM22 0V5L24.3 2.5ZM24.8 0V5" fill="#555" stroke="#555" stroke-width="0.5"/></svg>
  <div class="a" style="left:56.2px;top:174.6px;width:10px;height:10.2px;border:1px solid #dddbd7;border-radius:2.5px;background:#efeeec"></div><div class="a" style="left:66.2px;top:174.6px;width:10px;height:10.2px;border:1px solid #dddbd7;border-radius:2.5px;background:#efeeec"></div>
  <svg class="a" style="left:57.5px;top:176.5px" width="18" height="6" viewBox="0 0 18 6"><path d="M0.5 1.8V0.5H2M6 0.5H7.5V1.8M7.5 4.2V5.5H6M2 5.5H0.5V4.2" stroke="#555" stroke-width="0.8" fill="none"/><path d="M11 0.5V5.5M13.2 0.5V5.5M15.4 0.5V5.5" stroke="#555" stroke-width="1"/><path d="M10.2 2h1.6M12.4 3.5h1.6M14.6 1.5h1.6" stroke="#555" stroke-width="0.8"/></svg>
  <div class="a" style="left:82.6px;top:174.6px;width:10px;height:10.2px;border:1px solid #dddbd7;border-radius:2.5px;background:#efeeec"></div><div class="a" style="left:92.8px;top:174.6px;width:10px;height:10.2px;border:1px solid #dddbd7;border-radius:2.5px;background:#efeeec"></div><div class="a" style="left:103px;top:174.6px;width:10px;height:10.2px;border:1px solid #dddbd7;border-radius:2.5px;background:#efeeec"></div>
  <svg class="a" style="left:84.5px;top:176.5px" width="27" height="6" viewBox="0 0 27 6"><path d="M0.5 0.8H6M0.5 2.4H6M0.5 4H4.5M0.5 5.5H4.5" stroke="#555" stroke-width="0.7"/><path d="M10 2.5V1H15.5M15.5 3.5V5H10" stroke="#555" stroke-width="0.8" fill="none"/><path d="M20 0.5L25.5 5.5M20 5.5L25.5 0.5" stroke="#555" stroke-width="0.9"/></svg>
  <svg class="a" style="left:199.5px;top:181.4px" width="4" height="4" viewBox="0 0 4 4"><path d="M0 1.2H1.5L3.8 0V4L1.5 2.8H0Z" fill="#444"/><path d="M3 2H4" stroke="#f39a21" stroke-width="0.8"/></svg>
  <svg class="a" style="left:207.2px;top:176.8px" width="31" height="9" viewBox="0 0 31 9"><path d="M0.5 8.5L30 0.6V8.5Z" fill="#f4f4f3" stroke="#666" stroke-width="0.7"/></svg>
  <div class="t" style="left:212px;top:176px;font-size:5px;line-height:6px;color:#8b8b8b">0%</div>
</div>

</body></html>
